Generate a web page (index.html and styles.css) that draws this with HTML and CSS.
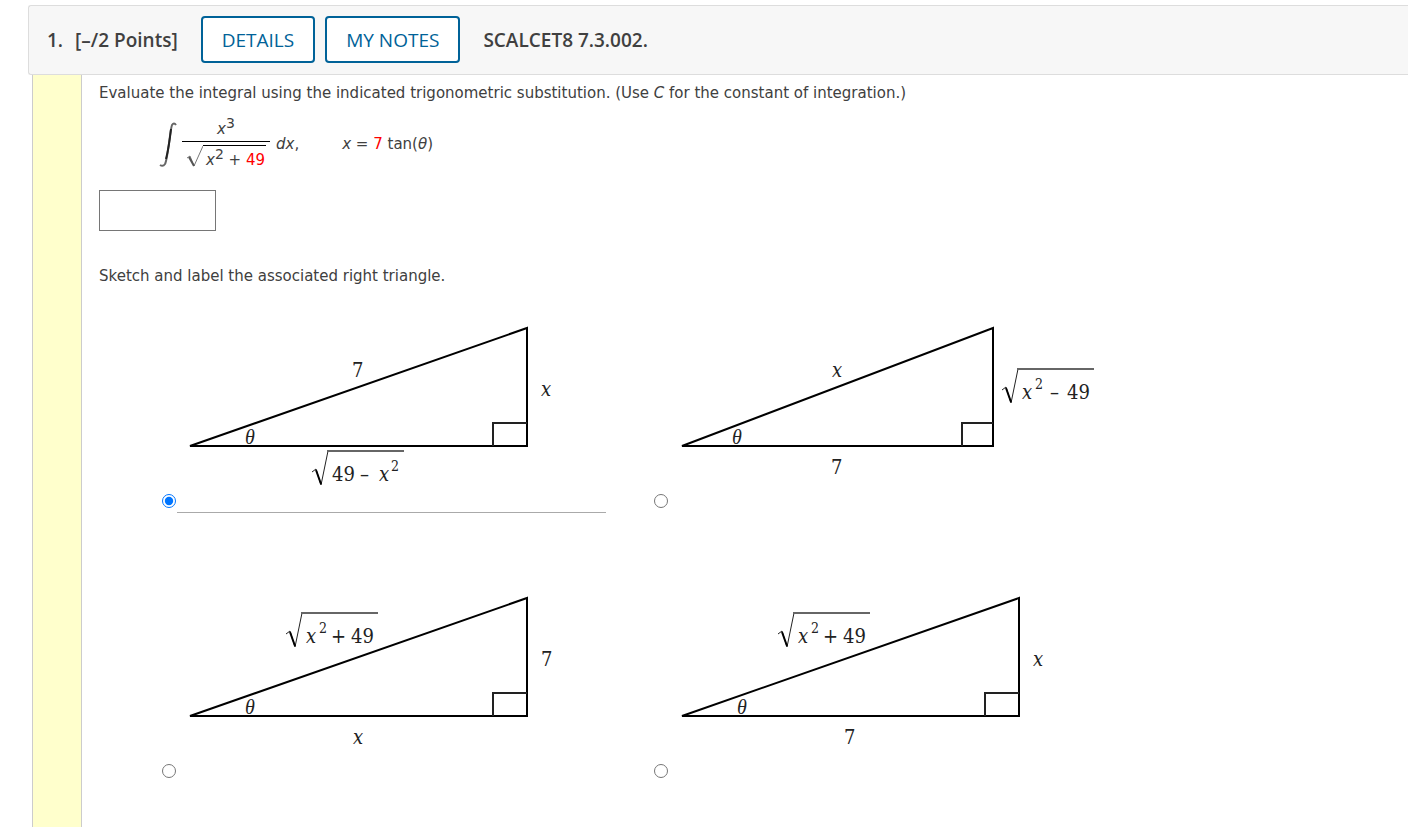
FILE: index.html
```html
<!DOCTYPE html>
<html lang="en">
<head>
    <meta charset="UTF-8">
    <meta name="viewport" content="width=device-width, initial-scale=1.0">
    <title>SCALCET8 7.3.002.</title>
    <link rel="stylesheet" href="styles.css">
</head>
<body>
    <header class="question-header">
        <h2 class="number">1.</h2>
        <span class="points">[–/2 Points]</span>
        <button type="button">DETAILS</button>
        <button type="button">MY NOTES</button>
        <span class="source">SCALCET8 7.3.002.</span>
    </header>

    <main class="question">
        <div class="margin-strip"></div>
        <form class="question-body">
            <p>Evaluate the integral using the indicated trigonometric substitution. (Use <i>C</i> for the constant of integration.)</p>

            <div class="equation">
                <svg class="integral" width="18" height="46" viewBox="0 0 18 46">
                    <path d="M17 4 Q15 1 13 4 C11 9 9 37 6 43 Q4 46 1 44" fill="none" stroke="#666" stroke-width="2"/>
                    <path d="M12 8 Q10 26 7 38" fill="none" stroke="#222" stroke-width="2"/>
                </svg>
                <div class="fraction">
                    <div class="numerator"><i>x</i><sup>3</sup></div>
                    <div class="denominator">
                        <svg width="17" height="24" viewBox="0 0 17 24">
                            <path d="M1 13 L4 11 L8 21 L17 1" fill="none" stroke="#777" stroke-width="1"/>
                            <path d="M3 12 L8 21" stroke="#555" stroke-width="2"/>
                        </svg>
                        <span class="radicand"><i>x</i><sup>2</sup> + <b>49</b></span>
                    </div>
                </div>
                <span class="dx"><i>dx</i>,</span>
                <span><i>x</i> = <b>7</b> tan(<i>θ</i>)</span>
            </div>

            <input type="text" class="answer" aria-label="Answer">

            <p>Sketch and label the associated right triangle.</p>

            <div class="choices">
                <label class="choice">
                    <input type="radio" name="triangle" value="1" checked>
                    <svg class="triangle" width="429" height="201" viewBox="0 0 429 201">
                        <path class="sides" d="M13 135 L350 17 V135 Z"/>
                        <path class="corner" d="M316 135 V112 H350"/>
                        <text x="68" y="133" class="theta">θ</text>
                        <text x="175" y="66">7</text>
                        <text x="364" y="85" class="var">x</text>
                        <g transform="translate(134 139)">
                            <path class="root" d="M1 22 L5 19 L10 35 L17 1"/>
                            <path class="root-thick" d="M5 20 L10 34"/>
                            <path class="overline" d="M16 1 H93"/>
                            <text x="21" y="31">49</text>
                            <text x="49" y="31">–</text>
                            <text x="68" y="31" class="var">x</text>
                            <text x="80" y="21" class="power">2</text>
                        </g>
                    </svg>
                </label>
                <label class="choice">
                    <input type="radio" name="triangle" value="2">
                    <svg class="triangle" width="429" height="201" viewBox="0 0 429 201">
                        <path class="sides" d="M13 135 L324 17 V135 Z"/>
                        <path class="corner" d="M293 135 V112 H324"/>
                        <text x="63" y="133" class="theta">θ</text>
                        <text x="163" y="66" class="var">x</text>
                        <text x="162" y="163">7</text>
                        <g transform="translate(332 57)">
                            <path class="root" d="M1 22 L5 19 L10 35 L17 1"/>
                            <path class="root-thick" d="M5 20 L10 34"/>
                            <path class="overline" d="M16 1 H93"/>
                            <text x="21" y="31" class="var">x</text>
                            <text x="34" y="21" class="power">2</text>
                            <text x="49" y="31">–</text>
                            <text x="66" y="31">49</text>
                        </g>
                    </svg>
                </label>
                <label class="choice">
                    <input type="radio" name="triangle" value="3">
                    <svg class="triangle" width="429" height="201" viewBox="0 0 429 201">
                        <path class="sides" d="M13 135 L350 17 V135 Z"/>
                        <path class="corner" d="M316 135 V112 H350"/>
                        <text x="68" y="133" class="theta">θ</text>
                        <text x="364" y="85">7</text>
                        <text x="176" y="163" class="var">x</text>
                        <g transform="translate(108 31)">
                            <path class="root" d="M1 22 L5 19 L10 35 L17 1"/>
                            <path class="root-thick" d="M5 20 L10 34"/>
                            <path class="overline" d="M16 1 H93"/>
                            <text x="21" y="31" class="var">x</text>
                            <text x="34" y="21" class="power">2</text>
                            <text x="46" y="31">+</text>
                            <text x="66" y="31">49</text>
                        </g>
                    </svg>
                </label>
                <label class="choice">
                    <input type="radio" name="triangle" value="4">
                    <svg class="triangle" width="429" height="201" viewBox="0 0 429 201">
                        <path class="sides" d="M13 135 L350 17 V135 Z"/>
                        <path class="corner" d="M316 135 V112 H350"/>
                        <text x="68" y="133" class="theta">θ</text>
                        <text x="364" y="85" class="var">x</text>
                        <text x="175" y="163">7</text>
                        <g transform="translate(108 31)">
                            <path class="root" d="M1 22 L5 19 L10 35 L17 1"/>
                            <path class="root-thick" d="M5 20 L10 34"/>
                            <path class="overline" d="M16 1 H93"/>
                            <text x="21" y="31" class="var">x</text>
                            <text x="34" y="21" class="power">2</text>
                            <text x="46" y="31">+</text>
                            <text x="66" y="31">49</text>
                        </g>
                    </svg>
                </label>
            </div>
        </form>
    </main>
</body>
</html>
```
FILE: styles.css
```css
* {
    box-sizing: border-box;
}
body {
    margin: 5px 0 0 28px;
    min-height: calc(100vh - 5px);
    display: flex;
    flex-direction: column;
    background-color: #fff;
    color: #404040;
    font-family: Verdana, "DejaVu Sans", sans-serif;
    font-size: 15px;
}
.question-header {
    display: flex;
    align-items: center;
    height: 70px;
    padding: 0 0 1px 18px;
    border: 1px solid #ddd;
    border-right: none;
    border-radius: 3px 0 0 3px;
    background-color: #f7f7f7;
    font-family: "Open Sans", sans-serif;
    font-size: 19px;
    font-weight: 600;
}
.number {
    margin: 0 12px 0 0;
    font-size: 19px;
    font-weight: 600;
}
.points {
    margin-right: 23px;
}
.question-header button {
    height: 47px;
    margin-right: 10px;
    padding: 0 19px;
    border: 2px solid #006298;
    border-radius: 4px;
    background-color: #fff;
    color: #006298;
    font-family: "Open Sans", sans-serif;
    font-size: 19px;
    cursor: pointer;
}
.source {
    margin-left: 13px;
}
.question {
    display: flex;
    flex: 1;
    margin-left: 4px;
}
.margin-strip {
    width: 50px;
    border: 1px solid #ccc;
    border-width: 0 1px;
    background-color: #ffc;
}
.question-body {
    flex: 1;
    padding: 8px 0 0 17px;
}
p {
    margin: 0;
    line-height: 20px;
}
.equation {
    display: flex;
    align-items: center;
    height: 56px;
    margin: 13px 0 18px 60px;
}
.equation b {
    color: #f00;
    font-weight: normal;
}
.equation sup {
    font-size: 14px;
    line-height: 0;
    vertical-align: 6px;
}
.fraction {
    margin: 0 6px 0 5px;
}
.numerator {
    height: 25px;
    padding-top: 3px;
    line-height: 20px;
    text-align: center;
}
.denominator {
    display: flex;
    height: 31px;
    padding: 3px 4px 0;
    border-top: 1px solid #000;
}
.radicand {
    height: 24px;
    padding: 4px 1px 0 3px;
    border-top: 1px solid #000;
    line-height: 20px;
}
.dx {
    margin-right: 43px;
}
.answer {
    display: block;
    width: 117px;
    height: 41px;
    margin-bottom: 35px;
    border: 1px solid #767676;
    font-size: 15px;
}
.choices {
    display: grid;
    grid-template-columns: 492px 492px;
    row-gap: 68px;
    margin: 25px 0 0 63px;
}
.choice {
    display: flex;
    align-items: flex-end;
}
.choice input {
    width: 14px;
    height: 14px;
    margin: 0 1px 5px 0;
}
.triangle {
    box-sizing: content-box;
    border-bottom: 1px solid transparent;
}
.choice input:checked + .triangle {
    border-bottom-color: #aaa;
}
.triangle path {
    fill: none;
    stroke: #000;
    stroke-width: 2;
}
.triangle .corner {
    stroke: #222;
}
.triangle .root {
    stroke: #222;
    stroke-width: 1;
}
.triangle .overline {
    stroke: #666;
}
.triangle text {
    fill: #222;
    font-family: "DejaVu Serif Condensed", "DejaVu Serif", serif;
    font-size: 20px;
}
.triangle .var,
.triangle .theta {
    font-style: italic;
}
.triangle .theta {
    font-family: "Liberation Serif", serif;
}
.triangle .power {
    font-size: 14px;
}
```
